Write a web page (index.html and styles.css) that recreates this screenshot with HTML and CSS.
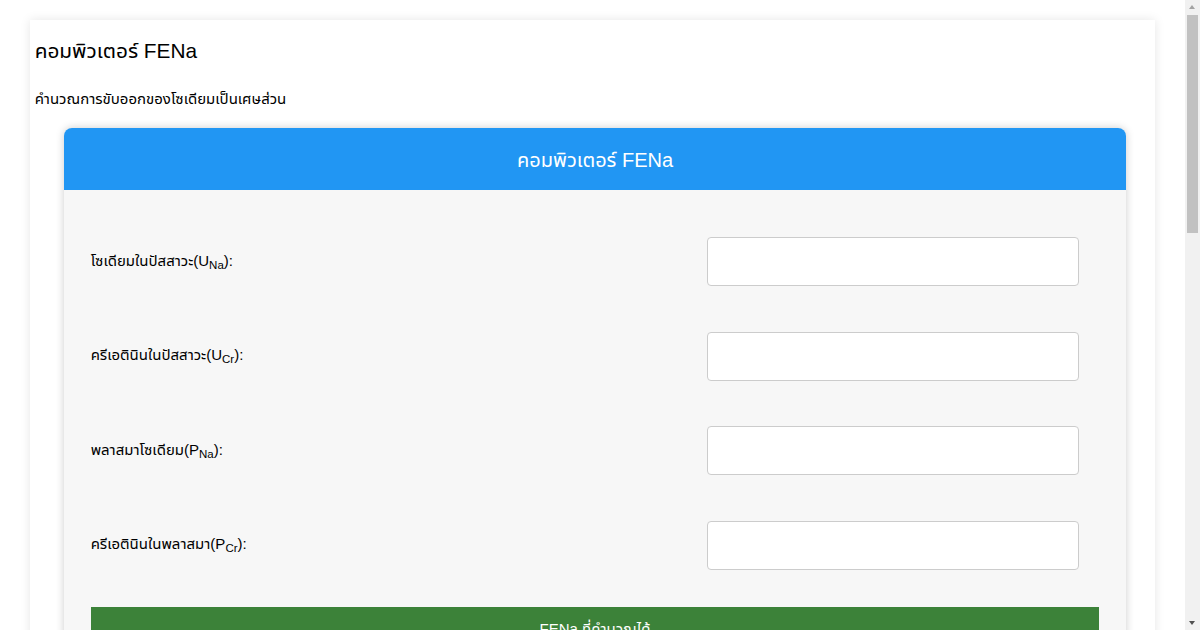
FILE: index.html
```html
<!DOCTYPE html>
<html lang="th">
<head>
<meta charset="utf-8">
<title>คอมพิวเตอร์ FENa</title>
<link rel="stylesheet" href="styles.css">
</head>
<body>
<div class="container">
  <h1 class="page-title">คอมพิวเตอร์ FENa</h1>
  <p class="page-sub">คำนวณการขับออกของโซเดียมเป็นเศษส่วน</p>
  <div class="card">
    <div class="card-header">คอมพิวเตอร์ FENa</div>
    <div class="card-body">
      <div class="form-row">
        <label class="form-label">โซเดียมในปัสสาวะ(U<sub>Na</sub>):</label>
        <input class="form-input" type="text">
      </div>
      <div class="form-row">
        <label class="form-label">ครีเอตินินในปัสสาวะ(U<sub>Cr</sub>):</label>
        <input class="form-input" type="text">
      </div>
      <div class="form-row">
        <label class="form-label">พลาสมาโซเดียม(P<sub>Na</sub>):</label>
        <input class="form-input" type="text">
      </div>
      <div class="form-row form-row-last">
        <label class="form-label">ครีเอตินินในพลาสมา(P<sub>Cr</sub>):</label>
        <input class="form-input" type="text">
      </div>
      <button class="calc-btn" type="button">FENa ที่คำนวณได้</button>
      <div class="result">ผลลัพธ์</div>
    </div>
  </div>
</div>
<div class="scrollbar">
  <div class="sb-up"></div>
  <div class="sb-thumb"></div>
  <div class="sb-down"></div>
</div>
</body>
</html>
```
FILE: styles.css
```css
html, body {
  margin: 0;
  padding: 0;
  background: #fff;
}
body {
  font-family: "Liberation Sans", "Noto Sans Thai UI", "Noto Sans Thai", Arial, sans-serif;
  color: #000;
  font-size: 15px;
  padding-right: 15px;
}
.container {
  width: 95%;
  margin: 20px auto;
  background: #fff;
  box-shadow: 0 0 10px rgba(0,0,0,0.1);
  padding: 5px 5px 40px;
  box-sizing: border-box;
}
.page-title {
  font-size: 20.8px;
  font-weight: normal;
  margin: 13px 0 0;
  line-height: 25px;
}
.page-sub {
  font-size: 15px;
  margin: 27px 0 0;
  line-height: 18px;
}
.card {
  margin: 20px 24px 0 29px;
  border-radius: 8px;
  box-shadow: 0 0 8px rgba(0,0,0,0.2);
  overflow: hidden;
  background: #f7f7f7;
}
.card-header {
  background: #2196f3;
  color: #fff;
  height: 62px;
  display: flex;
  align-items: center;
  justify-content: center;
  font-size: 20px;
}
.card-body {
  padding: 47px 27px 30px;
}
.form-row {
  display: grid;
  grid-template-columns: 1fr 372px;
  align-items: center;
  padding-right: 20px;
  margin-bottom: 45.5px;
}
.form-row-last {
  margin-bottom: 37px;
}
.form-label {
  font-size: 15px;
  margin-bottom: 4px;
}
.form-label sub {
  font-size: 11.5px;
  vertical-align: -3px;
  line-height: 0;
}
.form-input {
  height: 49px;
  box-sizing: border-box;
  border: 1px solid #ccc;
  border-radius: 4px;
  background: #fff;
  width: 100%;
  margin: 0;
  font-size: 15px;
}
.calc-btn {
  display: block;
  width: 100%;
  height: 42px;
  background: #3c8239;
  color: #fff;
  border: none;
  font-family: inherit;
  font-size: 15px;
  padding: 0;
}
.result {
  margin-top: 30px;
  font-size: 15px;
  min-height: 60px;
}
.scrollbar {
  position: fixed;
  top: 0;
  right: 0;
  width: 15px;
  height: 100%;
  background: #f1f1f1;
}
.sb-thumb {
  position: absolute;
  top: 15px;
  left: 2px;
  width: 11px;
  height: 218px;
  background: #c1c1c1;
}
.sb-up {
  position: absolute;
  top: 5px;
  left: 4px;
  width: 0;
  height: 0;
  border-left: 3.5px solid transparent;
  border-right: 3.5px solid transparent;
  border-bottom: 4px solid #a3a3a3;
}
.sb-down {
  position: absolute;
  bottom: 5px;
  left: 4px;
  width: 0;
  height: 0;
  border-left: 3.5px solid transparent;
  border-right: 3.5px solid transparent;
  border-top: 4px solid #505050;
}
```
